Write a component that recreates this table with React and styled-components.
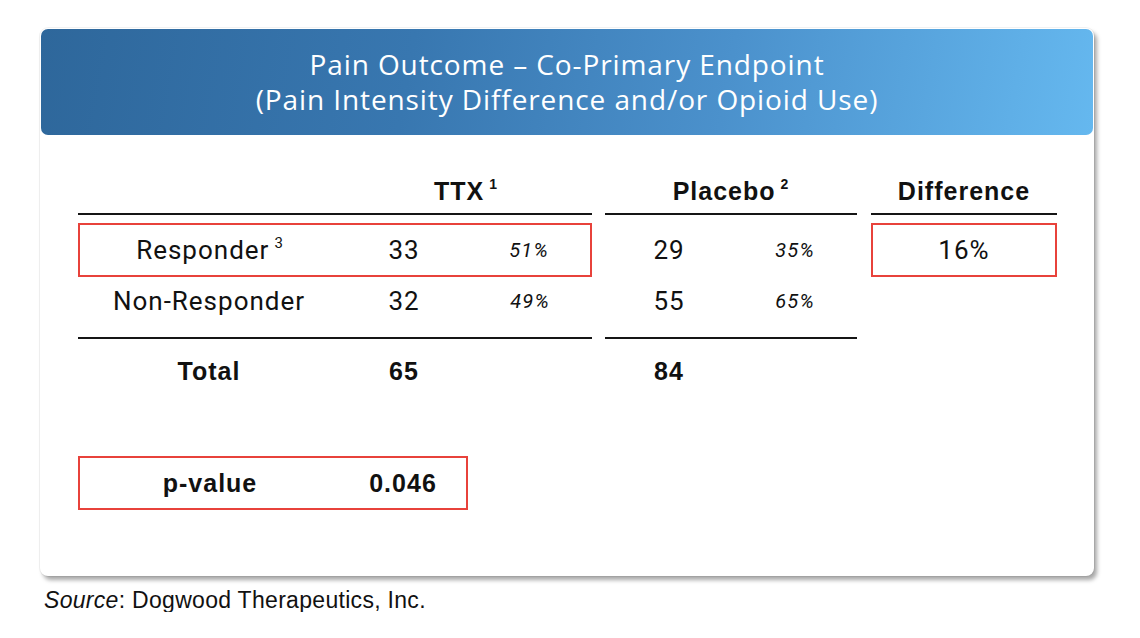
import React from "react";
import styled, { createGlobalStyle } from "styled-components";

const Global = createGlobalStyle`
  html, body { margin: 0; padding: 0; background: #ffffff; }
  body { font-family: Roboto, "Liberation Sans", sans-serif; color: #111; }
`;

const COLS = "262px 128px 124px 13px 128px 124px 14px 186px";

const Page = styled.div`
  padding: 28px 0 0 40px;
`;

const Card = styled.div`
  width: 1054px;
  height: 548px;
  box-sizing: border-box;
  background: #fff;
  border-radius: 8px;
  padding: 1px;
  box-shadow: 0 0 0 1px rgba(0, 0, 0, 0.05), 3px 4px 4px rgba(0, 0, 0, 0.35);
  display: flex;
  flex-direction: column;
`;

const Banner = styled.div`
  height: 106px;
  border-radius: 7px;
  background: linear-gradient(100deg, #2e679b 0%, #3877b0 35%, #4b91cc 65%, #65b8ef 100%);
  display: flex;
  flex-direction: column;
  align-items: center;
  justify-content: center;
  color: #fff;
  font-family: "Open Sans", sans-serif;
  font-size: 28px;
  letter-spacing: 0.9px;
  line-height: 35px;
`;

const Body = styled.div`
  padding: 35px 0 0 37px;
  display: flex;
  flex-direction: column;
`;

const Row = styled.div`
  display: grid;
  grid-template-columns: ${COLS};
  height: ${(p) => p.$h}px;
  margin-top: ${(p) => p.$mt || 0}px;
  align-items: center;
`;

const HeadCell = styled.div`
  grid-column: ${(p) => p.$span};
  text-align: center;
  font-family: "Liberation Sans", Arial, sans-serif;
  font-weight: 700;
  font-size: 25px;
  letter-spacing: 1px;
`;

const Sup = styled.sup`
  font-size: 14px;
  font-weight: 700;
  vertical-align: 0;
  position: relative;
  top: -11px;
  margin-left: 5px;
`;

const Rule = styled.div`
  grid-column: ${(p) => p.$span};
  height: 2px;
  background: #151515;
  align-self: stretch;
`;

const Box = styled.div`
  grid-column: ${(p) => p.$span};
  align-self: stretch;
  box-sizing: border-box;
  border: 2px solid #e8423b;
  display: grid;
  grid-template-columns: ${(p) => p.$cols || "1fr"};
  align-items: center;
`;

const Cell = styled.div`
  grid-column: ${(p) => p.$span || "auto"};
  text-align: center;
  font-family: ${(p) => (p.$bold ? '"Liberation Sans", Arial, sans-serif' : "Roboto, sans-serif")};
  font-weight: ${(p) => (p.$bold ? 700 : 400)};
  font-size: ${(p) => (p.$bold ? 25 : 26)}px;
  letter-spacing: 1px;
`;

const Pct = styled.div`
  grid-column: ${(p) => p.$span || "auto"};
  text-align: center;
  font-family: Roboto, sans-serif;
  font-style: italic;
  font-size: 20px;
  letter-spacing: 1.2px;
`;

const LabelSup = styled.sup`
  font-size: 15px;
  vertical-align: 0;
  position: relative;
  top: -11px;
  margin-left: 5px;
`;

const Source = styled.div`
  margin-top: 12px;
  margin-left: 4px;
  font-family: "Liberation Sans", Arial, sans-serif;
  font-size: 23px;
  letter-spacing: 0.3px;
  line-height: 24px;
  color: #111;
`;

export default function App() {
  return (
    <>
      <Global />
      <Page>
        <Card>
          <Banner>
            <div>Pain Outcome – Co-Primary Endpoint</div>
            <div>(Pain Intensity Difference and/or Opioid Use)</div>
          </Banner>
          <Body>
            <Row $h={43}>
              <HeadCell $span="2 / 4">
                TTX<Sup>1</Sup>
              </HeadCell>
              <HeadCell $span="5 / 7">
                Placebo<Sup>2</Sup>
              </HeadCell>
              <HeadCell $span="8 / 9">Difference</HeadCell>
            </Row>
            <Row $h={2}>
              <Rule $span="1 / 4" />
              <Rule $span="5 / 7" />
              <Rule $span="8 / 9" />
            </Row>
            <Row $h={54} $mt={8}>
              <Box $span="1 / 4" $cols="260px 128px 122px">
                <Cell>
                  Responder<LabelSup>3</LabelSup>
                </Cell>
                <Cell>33</Cell>
                <Pct>51%</Pct>
              </Box>
              <Cell $span="5 / 6">29</Cell>
              <Pct $span="6 / 7">35%</Pct>
              <Box $span="8 / 9">
                <Cell>16%</Cell>
              </Box>
            </Row>
            <Row $h={48}>
              <Cell $span="1 / 2">Non-Responder</Cell>
              <Cell $span="2 / 3">32</Cell>
              <Pct $span="3 / 4">49%</Pct>
              <Cell $span="5 / 6">55</Cell>
              <Pct $span="6 / 7">65%</Pct>
            </Row>
            <Row $h={2} $mt={12}>
              <Rule $span="1 / 4" />
              <Rule $span="5 / 7" />
            </Row>
            <Row $h={64}>
              <Cell $span="1 / 2" $bold>Total</Cell>
              <Cell $span="2 / 3" $bold>65</Cell>
              <Cell $span="5 / 6" $bold>84</Cell>
            </Row>
            <Row $h={54} $mt={53}>
              <Box $span="1 / 3" $cols="260px 126px">
                <Cell $bold>p-value</Cell>
                <Cell $bold>0.046</Cell>
              </Box>
            </Row>
          </Body>
        </Card>
        <Source>
          <i>Source</i>: Dogwood Therapeutics, Inc.
        </Source>
      </Page>
    </>
  );
}
